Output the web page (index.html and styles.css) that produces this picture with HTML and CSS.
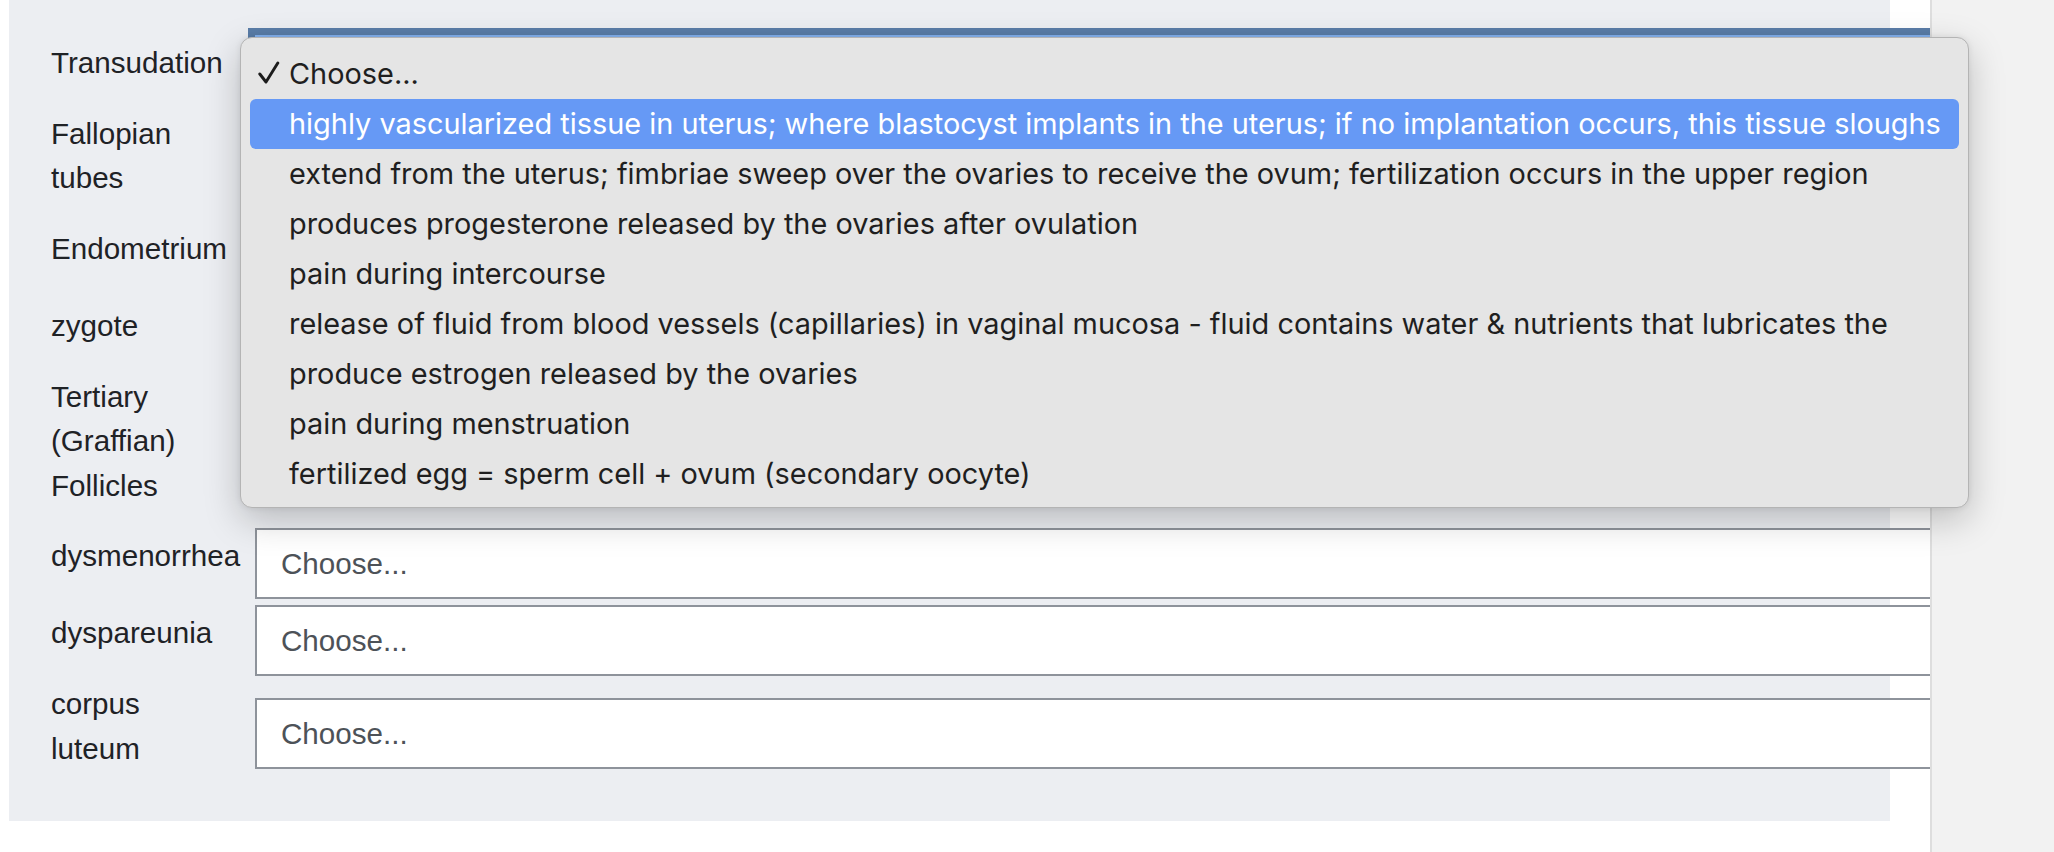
FILE: index.html
```html
<!DOCTYPE html>
<html lang="en">
<head>
<meta charset="utf-8">
<title>Matching</title>
<link rel="stylesheet" href="styles.css">
</head>
<body>
<div class="page">
  <div class="main">
    <div class="panel">
      <div class="row">
        <label class="lbl">Transudation</label>
        <div class="sel sel-focus">Choose...</div>
      </div>
      <div class="row">
        <label class="lbl">Fallopian tubes</label>
        <div class="sel">Choose...</div>
      </div>
      <div class="row">
        <label class="lbl">Endometrium</label>
        <div class="sel">Choose...</div>
      </div>
      <div class="row">
        <label class="lbl">zygote</label>
        <div class="sel">Choose...</div>
      </div>
      <div class="row">
        <label class="lbl">Tertiary (Graffian) Follicles</label>
        <div class="sel">Choose...</div>
      </div>
      <div class="row">
        <label class="lbl">dysmenorrhea</label>
        <div class="sel">Choose...</div>
      </div>
      <div class="row">
        <label class="lbl">dyspareunia</label>
        <div class="sel">Choose...</div>
      </div>
      <div class="row">
        <label class="lbl">corpus luteum</label>
        <div class="sel">Choose...</div>
      </div>
    </div>
  </div>
  <div class="side"></div>
</div>

<div class="menu">
  <ul class="menu-list">
    <li class="item checked"><svg class="check" width="22" height="24" viewBox="0 0 22 24"><path d="M1.8 13 L8 21 L19.8 2" fill="none" stroke="#1c1c1c" stroke-width="2.9" stroke-linecap="round" stroke-linejoin="round"/></svg>Choose...</li>
    <li class="item active">highly vascularized tissue in uterus; where blastocyst implants in the uterus; if no implantation occurs, this tissue sloughs</li>
    <li class="item">extend from the uterus; fimbriae sweep over the ovaries to receive the ovum; fertilization occurs in the upper region</li>
    <li class="item">produces progesterone released by the ovaries after ovulation</li>
    <li class="item">pain during intercourse</li>
    <li class="item">release of fluid from blood vessels (capillaries) in vaginal mucosa - fluid contains water &amp; nutrients that lubricates the</li>
    <li class="item">produce estrogen released by the ovaries</li>
    <li class="item">pain during menstruation</li>
    <li class="item">fertilized egg = sperm cell + ovum (secondary oocyte)</li>
  </ul>
</div>
</body>
</html>
```

FILE: styles.css
```css
html, body {
  margin: 0;
  padding: 0;
  background: #ffffff;
}

body {
  width: 2054px;
  height: 852px;
  overflow: hidden;
  position: relative;
  font-family: "Liberation Sans", Arial, sans-serif;
}

.page {
  display: flex;
  height: 852px;
}

.main {
  width: 1930px;
  flex: none;
  overflow: hidden;
  background: #ffffff;
}

.panel {
  margin-left: 9px;
  width: 1881px;
  box-sizing: border-box;
  background: #eceef2;
  padding: 34.5px 0 35.5px 42px;
}

.row {
  display: flex;
  align-items: center;
  margin-bottom: 6px;
}

.row:last-child {
  margin-bottom: 0;
}

.lbl {
  width: 180px;
  flex: none;
  margin-right: 24px;
  padding-bottom: 14px;
  font-size: 29.6px;
  line-height: 44.5px;
  color: #1f2226;
  white-space: normal;
}

.sel {
  flex: none;
  width: 1800px;
  height: 71px;
  box-sizing: border-box;
  border: 2px solid #8e939b;
  background: #ffffff;
  padding-left: 24px;
  font-size: 29.6px;
  line-height: 67px;
  color: #4d5258;
}

.sel-focus {
  border-color: #86b4f2;
  box-shadow: 0 0 0 7px #5a7da8;
}

.side {
  flex: 1;
  background: #f2f2f2;
  border-left: 2px solid #dedede;
}

.menu {
  position: absolute;
  left: 240px;
  top: 37px;
  width: 1729px;
  height: 471px;
  box-sizing: border-box;
  background: #e5e5e5;
  border: 1px solid #b4b4b4;
  border-radius: 12px;
  box-shadow: 0 12px 36px rgba(0, 0, 0, 0.22), 0 0 6px rgba(0, 0, 0, 0.08);
  padding: 11px 9px 9px 9px;
}

.menu-list {
  list-style: none;
  margin: 0;
  padding: 0;
}

.item {
  position: relative;
  height: 50px;
  line-height: 50px;
  padding-left: 39px;
  border-radius: 6px;
  white-space: nowrap;
  font-family: Inter, "Noto Sans", sans-serif;
  font-size: 28.9px;
  color: #1f1f1f;
}

.item.active {
  background: #6699f5;
  color: #ffffff;
}

.check {
  position: absolute;
  left: 8px;
  top: 12px;
  width: 22px;
  height: 24px;
}
```
